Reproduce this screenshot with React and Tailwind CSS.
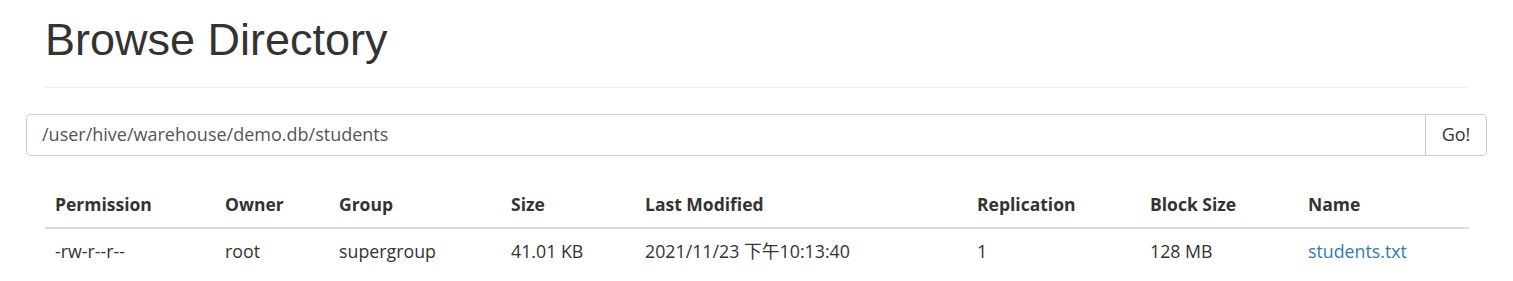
import React from 'react'

const cols = [
  { label: 'Permission', w: 'w-[170px]' },
  { label: 'Owner', w: 'w-[114px]' },
  { label: 'Group', w: 'w-[172px]' },
  { label: 'Size', w: 'w-[134px]' },
  { label: 'Last Modified', w: 'w-[332px]' },
  { label: 'Replication', w: 'w-[173px]' },
  { label: 'Block Size', w: 'w-[158px]' },
  { label: 'Name', w: 'w-[171px]' },
]

const files = [
  {
    permission: '-rw-r--r--',
    owner: 'root',
    group: 'supergroup',
    size: '41.01 KB',
    modified: '2021/11/23 下午10:13:40',
    replication: '1',
    blockSize: '128 MB',
    name: 'students.txt',
  },
]

export default function App() {
  return (
    <div className="min-h-screen bg-white px-[26px] text-[#333] font-['Open_Sans','Noto_Sans_CJK_SC',sans-serif] text-[17.5px] leading-[25px]">
      <div className="mx-[19px] border-b border-[#eee] pt-[15px] pb-[22px]">
        <h1 className="font-['Liberation_Sans',Arial,sans-serif] text-[45px] leading-[49.5px] font-normal">
          Browse Directory
        </h1>
      </div>

      <div className="mt-[26px] flex h-[42px]">
        <input
          className="flex-1 rounded-l-[5px] border border-[#ccc] px-[15px] text-[18px] text-[#555] outline-none"
          defaultValue="/user/hive/warehouse/demo.db/students"
        />
        <button className="w-[61px] rounded-r-[5px] border border-l-0 border-[#ccc] bg-white text-[18px] text-[#333]">
          Go!
        </button>
      </div>

      <table className="mx-[19px] mt-[26px] w-[1424px] table-fixed border-collapse">
        <colgroup>
          {cols.map(c => <col key={c.label} className={c.w} />)}
        </colgroup>
        <thead>
          <tr>
            {cols.map(c => (
              <th key={c.label} className="border-b-2 border-[#ddd] p-[10px] text-left font-bold">
                {c.label}
              </th>
            ))}
          </tr>
        </thead>
        <tbody className="text-[17.8px]">
          {files.map(f => (
            <tr key={f.name}>
              <td className="p-[10px]">{f.permission}</td>
              <td className="p-[10px]">{f.owner}</td>
              <td className="p-[10px]">{f.group}</td>
              <td className="p-[10px]">{f.size}</td>
              <td className="p-[10px]">{f.modified}</td>
              <td className="p-[10px]">{f.replication}</td>
              <td className="p-[10px]">{f.blockSize}</td>
              <td className="p-[10px]">
                <a href="#" className="text-[#337ab7]">{f.name}</a>
              </td>
            </tr>
          ))}
        </tbody>
      </table>
    </div>
  )
}
